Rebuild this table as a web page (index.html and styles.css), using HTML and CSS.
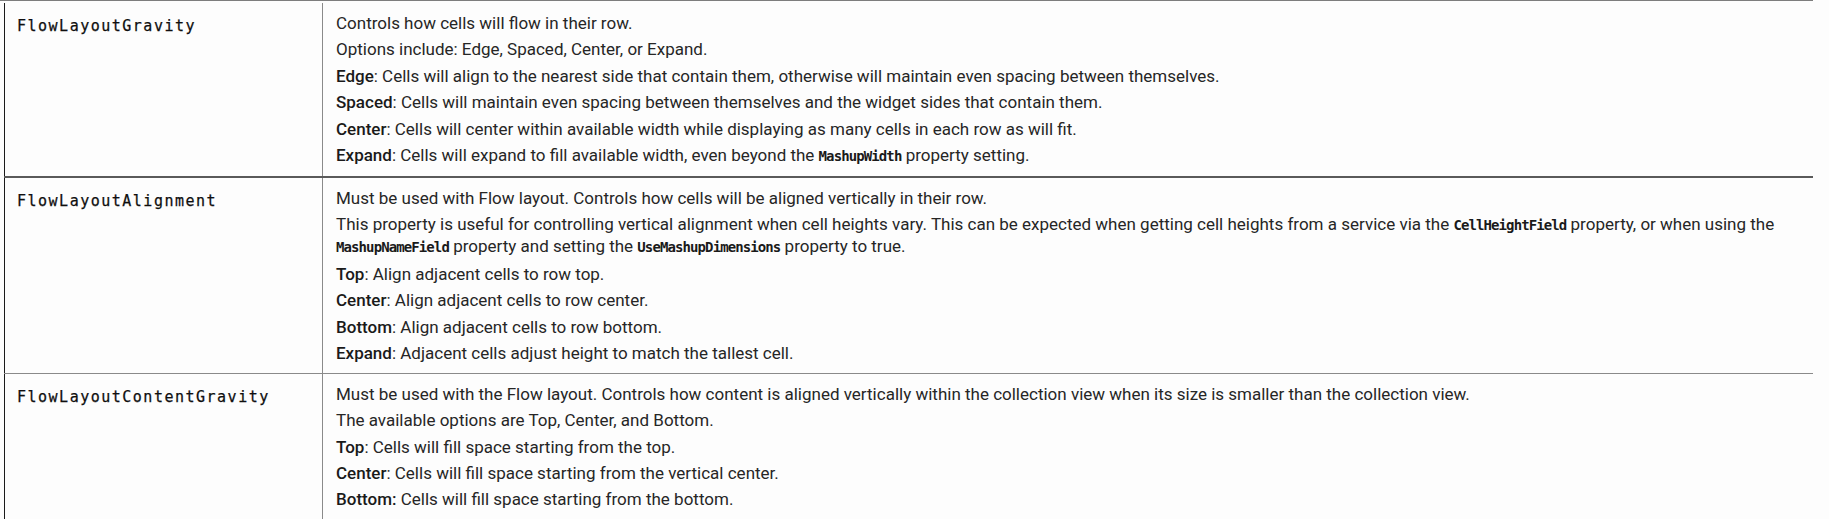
FILE: index.html
```html
<!DOCTYPE html>
<html>
<head>
<meta charset="utf-8">
<link rel="stylesheet" href="styles.css">
</head>
<body>
<div class="page">
<table class="props">
  <tbody>
    <tr class="row row-first">
      <td class="name"><code class="prop">FlowLayoutGravity</code></td>
      <td class="desc">
        <p>Controls how cells will flow in their row.</p>
        <p>Options include: Edge, Spaced, Center, or Expand.</p>
        <p><b>Edge</b>: Cells will align to the nearest side that contain them, otherwise will maintain even spacing between themselves.</p>
        <p><b>Spaced</b>: Cells will maintain even spacing between themselves and the widget sides that contain them.</p>
        <p><b>Center</b>: Cells will center within available width while displaying as many cells in each row as will fit.</p>
        <p><b>Expand</b>: Cells will expand to fill available width, even beyond the <code class="inline">MashupWidth</code> property setting.</p>
      </td>
    </tr>
    <tr class="row row-second">
      <td class="name"><code class="prop">FlowLayoutAlignment</code></td>
      <td class="desc">
        <p>Must be used with Flow layout. Controls how cells will be aligned vertically in their row.</p>
        <p>This property is useful for controlling vertical alignment when cell heights vary. This can be expected when getting cell heights from a service via the <code class="inline">CellHeightField</code> property, or when using the <code class="inline">MashupNameField</code> property and setting the <code class="inline">UseMashupDimensions</code> property to true.</p>
        <p><b>Top</b>: Align adjacent cells to row top.</p>
        <p><b>Center</b>: Align adjacent cells to row center.</p>
        <p><b>Bottom</b>: Align adjacent cells to row bottom.</p>
        <p><b>Expand</b>: Adjacent cells adjust height to match the tallest cell.</p>
      </td>
    </tr>
    <tr class="row row-third">
      <td class="name"><code class="prop">FlowLayoutContentGravity</code></td>
      <td class="desc">
        <p>Must be used with the Flow layout. Controls how content is aligned vertically within the collection view when its size is smaller than the collection view.</p>
        <p>The available options are Top, Center, and Bottom.</p>
        <p><b>Top</b>: Cells will fill space starting from the top.</p>
        <p><b>Center</b>: Cells will fill space starting from the vertical center.</p>
        <p><b>Bottom:</b> Cells will fill space starting from the bottom.</p>
      </td>
    </tr>
  </tbody>
</table>
</div>
</body>
</html>
```
FILE: styles.css
```css
html, body {
  margin: 0;
  padding: 0;
  background: #fdfdfd;
}
body {
  font-family: Roboto, "Liberation Sans", Arial, sans-serif;
  font-size: 17px;
  color: #262626;
  overflow: hidden;
}
.page {
  width: 1813px;
  padding-top: 2px;
  border-top: 1px solid #7d7d7d;
}
.props {
  border-collapse: collapse;
  width: 1809px;
  margin-left: 4px;
  border-left: 1px solid #1a1a1a;
}
.props td {
  vertical-align: top;
  padding: 0;
}
.name {
  width: 305px;
  padding: 12px 0 0 12px !important;
  border-right: 1px solid #8a8a8a;
}
.desc {
  padding: 10px 2px 9px 13px !important;
}
.row-first td { border-bottom: 2px solid #5a5a5a; }
.row-second td { border-bottom: 1px solid #8a8a8a; }
.prop {
  font-family: "DejaVu Sans Mono", "Liberation Mono", monospace;
  font-size: 15px;
  letter-spacing: 1.5px;
  color: #0f0f0f;
  -webkit-text-stroke: 0.25px #0f0f0f;
}
.desc p {
  margin: 0 0 5.4px 0;
  line-height: 21px;
}
.desc p:last-child { margin-bottom: 0; }
.desc b {
  font-weight: 500;
  color: #1a1a1a;
}
.inline {
  font-family: "DejaVu Sans Mono", "Liberation Mono", monospace;
  font-size: 14px;
  letter-spacing: -0.9px;
  font-weight: bold;
  color: #1a1a1a;
}
```
